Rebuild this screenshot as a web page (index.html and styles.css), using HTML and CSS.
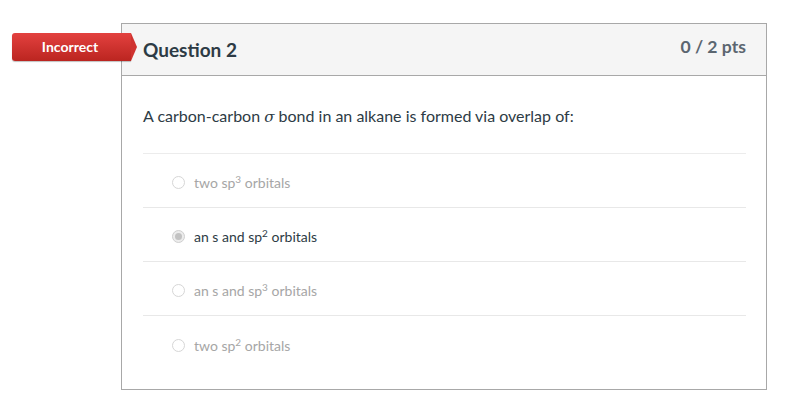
FILE: index.html
```html
<!DOCTYPE html>
<html>
<head>
<meta charset="utf-8">
<link rel="stylesheet" href="styles.css">
</head>
<body>
<div class="page">
  <div class="question">
    <div class="badge">Incorrect</div>
    <div class="q-header">
      <span class="q-title">Question 2</span>
      <span class="q-pts">0 / 2 pts</span>
    </div>
    <div class="q-body">
      <p class="q-text">A carbon-carbon <i class="sigma">σ</i> bond in an alkane is formed via overlap of:</p>
      <ul class="answers">
        <li class="answer"><span class="radio"></span><span class="label">two sp<sup>3</sup> orbitals</span></li>
        <li class="answer selected"><span class="radio"></span><span class="label">an s and sp<sup>2</sup> orbitals</span></li>
        <li class="answer"><span class="radio"></span><span class="label">an s and sp<sup>3</sup> orbitals</span></li>
        <li class="answer"><span class="radio"></span><span class="label">two sp<sup>2</sup> orbitals</span></li>
      </ul>
    </div>
  </div>
</div>
</body>
</html>
```
FILE: styles.css
```css
* { box-sizing: border-box; }
html, body { margin: 0; padding: 0; background: #fff; }
body { font-family: Lato, "Open Sans", sans-serif; color: #2d3b45; }
.page { padding: 23px 0 0 121px; }
.question {
  position: relative;
  width: 646px;
  height: 367px;
  border: 1px solid #a8a8a8;
}
.badge {
  position: absolute;
  left: -110px;
  top: 9px;
  width: 119px;
  height: 28px;
  background: linear-gradient(#e3413f, #bb2520);
  border-radius: 3px 0 0 3px;
  color: #fff;
  font-weight: bold;
  font-size: 14px;
  line-height: 27px;
  text-align: center;
  padding-right: 3px;
  box-shadow: 0 1px 1px rgba(0,0,0,0.25);
}
.badge::after {
  content: "";
  position: absolute;
  right: -6px;
  top: 0;
  width: 0; height: 0;
  border-top: 14px solid transparent;
  border-bottom: 14px solid transparent;
  border-left: 6px solid #cf3330;
}
.q-header {
  height: 52px;
  background: #f5f5f5;
  border-bottom: 1px solid #a8a8a8;
  display: flex;
  justify-content: space-between;
  align-items: flex-start;
  padding: 0 20px 0 21px;
}
.q-title {
  font-size: 19px;
  font-weight: bold;
  margin-top: 14px;
  color: #2d3b45;
}
.q-pts {
  font-size: 17.6px;
  font-weight: bold;
  margin-top: 12px;
  color: #5b6670;
}
.q-body { padding: 28px 20px 0 21px; }
.q-text {
  margin: 0;
  font-size: 16px;
  line-height: 24px;
  padding-bottom: 24px;
  border-bottom: 1px solid #ececec;
}
.sigma { font-family: "DejaVu Serif", serif; font-size: 15px; }
.answers { list-style: none; margin: 0; padding: 0; }
.answer {
  height: 54px;
  display: flex;
  align-items: center;
  padding: 4px 0 0 29px;
  border-bottom: 1px solid #e8e8e8;
  font-size: 14px;
  color: #a6a6a6;
}
.answer:last-child { border-bottom: none; }
.answer.selected { color: #2d3b45; }
.radio {
  width: 13px; height: 13px;
  border: 1px solid #d6d6d6;
  border-radius: 50%;
  background: #fff;
  margin-right: 9px;
  position: relative;
}
.selected .radio { background: #ececec; border-color: #cfcfcf; }
.selected .radio::after {
  content: "";
  position: absolute;
  left: 2px; top: 2px;
  width: 7px; height: 7px;
  border-radius: 50%;
  background: #c2c2c2;
}
.label sup { font-size: 10px; line-height: 0; vertical-align: 5px; }
```
